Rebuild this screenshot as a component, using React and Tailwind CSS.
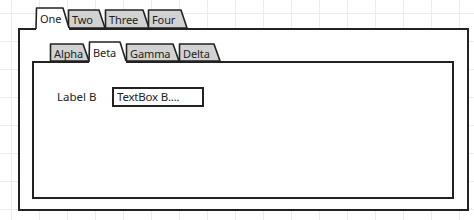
import React from "react";

const outerTabs = [
  { label: "One", w: 35, cls: "w-[35px]", ml: "", active: true },
  { label: "Two", w: 39, cls: "w-[39px]", ml: "-ml-[3px]" },
  { label: "Three", w: 46, cls: "w-[46px]", ml: "-ml-[2px]" },
  { label: "Four", w: 41, cls: "w-[41px]", ml: "-ml-[3px]" },
];

const innerTabs = [
  { label: "Alpha", w: 41, cls: "w-[41px]", ml: "" },
  { label: "Beta", w: 39, cls: "w-[39px]", ml: "-ml-[2px]", active: true },
  { label: "Gamma", w: 55, cls: "w-[55px]", ml: "-ml-[2px]" },
  { label: "Delta", w: 43, cls: "w-[43px]", ml: "-ml-[2px]" },
];

// sketchy tab: near-vertical left edge, slanted right edge
function Tab({ label, w, cls, ml, active, h }) {
  const th = active ? h + 1 : h - 1;
  const sh = th + (active ? 3 : 0);
  return (
    <div className={`relative flex items-end ${cls} ${ml} ${active ? "z-10" : "z-0"}`}>
      <div className="relative w-full" style={{ height: th }}>
        <svg className="absolute left-0 top-0" width={w} height={sh}>
          {active ? (
            <>
              <path d={`M1,${sh} L1,1 L${w - 7},1 L${w - 1},${th} L${w - 1},${sh} Z`} fill="#ffffff" />
              <path
                d={`M1,${th + 1} L1.5,1 L${w - 7},1 L${w - 1},${th}`}
                fill="none"
                stroke="#222"
                strokeWidth="1.6"
                strokeLinejoin="round"
              />
            </>
          ) : (
            <path
              d={`M1.5,${th} L1.5,1 L${w - 7},1 L${w - 1},${th} Z`}
              fill="#d2d2d2"
              stroke="#222"
              strokeWidth="1.6"
              strokeLinejoin="round"
            />
          )}
        </svg>
        <span className={`relative block pl-[5px] ${active ? "pt-[5px]" : "pt-[4px]"} text-[11px] leading-[13px] tracking-[-0.1px] text-[#222]`}>
          {label}
        </span>
      </div>
    </div>
  );
}

export default function App() {
  return (
    <div
      className="w-[474px] h-[220px] overflow-hidden bg-white bg-[linear-gradient(to_right,#ececec_1px,transparent_1px),linear-gradient(to_bottom,#ececec_1px,transparent_1px)] bg-[size:28px_28px] bg-[position:11px_13px] pt-[8px] pl-[18px]"
      style={{ fontFamily: "'Noto Sans', 'Liberation Sans', sans-serif" }}
    >
      {/* outer tab strip */}
      <div className="flex items-end h-[20px] pl-[17px]">
        {outerTabs.map((t) => (
          <Tab key={t.label} {...t} h={20} />
        ))}
      </div>

      {/* outer panel */}
      <div className="w-[451px] h-[183px] border-2 border-[#222] bg-white pt-[12px] pl-[12px]">
        <div className="flex items-end h-[19px] pl-[17px]">
          {innerTabs.map((t) => (
            <Tab key={t.label} {...t} h={19} />
          ))}
        </div>

        {/* inner panel */}
        <div className="w-[422px] h-[138px] border-2 border-[#222] bg-white pt-[24px] pl-[23px]">
          <div className="flex items-center">
            <div className="w-[55px] text-[11.5px] text-[#222]">Label B</div>
            <div className="w-[92px] h-[20px] border-2 border-[#222] pl-[3px] flex items-center text-[11.5px] tracking-[-0.2px] text-[#222]">
              TextBox B....
            </div>
          </div>
        </div>
      </div>
    </div>
  );
}
